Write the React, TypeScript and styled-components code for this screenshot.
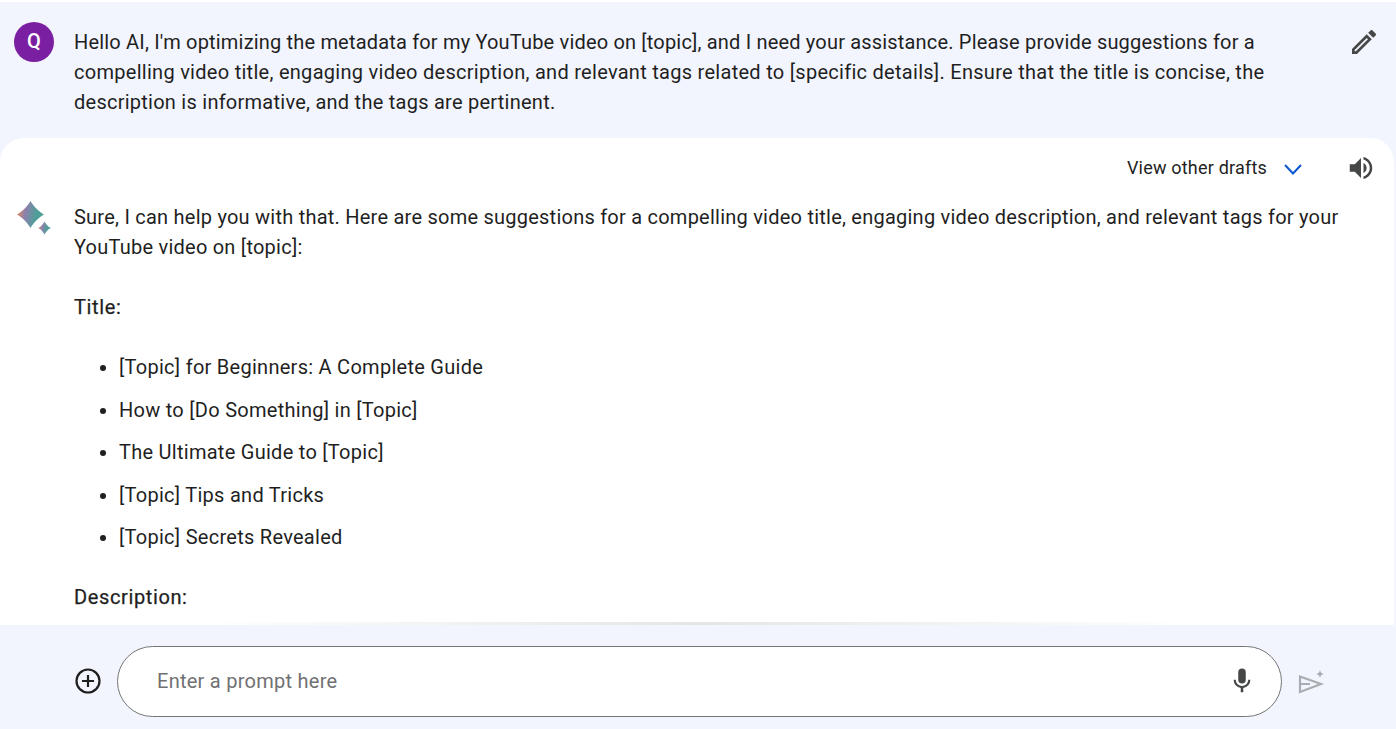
import React from 'react';
import styled, { createGlobalStyle } from 'styled-components';

const GlobalStyle = createGlobalStyle`
  html, body {
    margin: 0;
    padding: 0;
    height: 100%;
    background: #ffffff;
    overflow: hidden;
  }
  * { box-sizing: border-box; }
`;

const Page = styled.div`
  display: flex;
  flex-direction: column;
  height: 729px;
  padding-top: 2px;
  font-family: Roboto, "Liberation Sans", sans-serif;
  font-size: 20px;
  line-height: 30px;
  letter-spacing: 0.235px;
  color: #1f1f1f;
`;

const Main = styled.div`
  flex: 1;
  display: flex;
  flex-direction: column;
  min-height: 0;
  background: #f2f5fd;
`;

const PromptRow = styled.div`
  height: 136px;
  flex-shrink: 0;
  display: flex;
  padding: 20px 16px 0 14px;
`;

const Avatar = styled.div`
  width: 40px;
  height: 40px;
  margin-right: 20px;
  flex-shrink: 0;
  border-radius: 50%;
  background: #7b1fa2;
  color: #fff;
  font-size: 20px;
  font-weight: 500;
  line-height: 38px;
  text-align: center;
`;

const PromptText = styled.div`
  flex: 1;
  padding-top: 5px;
`;

const PromptLine = styled.span<{ $track: number }>`
  display: block;
  white-space: nowrap;
  letter-spacing: ${props => props.$track}px;
`;

const EditIcon = styled.svg`
  width: 32px;
  height: 32px;
  margin-top: 4px;
  flex-shrink: 0;
`;

const Card = styled.div`
  flex: 1;
  min-height: 0;
  margin-right: 2px;
  background: #fff;
  border-radius: 24px 24px 0 0;
  overflow: hidden;
`;

const CardHeader = styled.div`
  height: 60px;
  display: flex;
  align-items: center;
  justify-content: flex-end;
  padding-right: 18px;
`;

const DraftsLabel = styled.span`
  font-size: 18px;
  letter-spacing: 0.2px;
`;

const Chevron = styled.svg`
  width: 20px;
  height: 20px;
  margin-left: 16px;
  margin-right: 43px;
`;

const SpeakerIcon = styled.svg`
  width: 30px;
  height: 30px;
`;

const Response = styled.div`
  display: flex;
  padding: 4px 30px 0 14px;
`;

const SparkBox = styled.svg`
  width: 40px;
  height: 40px;
  margin-right: 20px;
  flex-shrink: 0;
  margin-top: -4px;
`;

const Body = styled.div`
  flex: 1;
`;

const Paragraph = styled.p`
  margin: 0 0 30px;
`;

const Label = styled.p`
  margin: 0 0 30px;
  letter-spacing: 0.62px;
  -webkit-text-stroke: 0.25px #1f1f1f;
`;

const Bullets = styled.ul`
  margin: 0 0 30px;
  padding-left: 45px;
`;

const Bullet = styled.li`
  margin-bottom: 12.5px;
  letter-spacing: 0.27px;
  &:last-child { margin-bottom: 0; }
`;

const Footer = styled.div`
  height: 104px;
  flex-shrink: 0;
  display: flex;
  align-items: flex-start;
  padding-top: 21px;
  position: relative;
  &::before {
    content: '';
    position: absolute;
    top: -3px;
    left: 200px;
    right: 200px;
    height: 3px;
    background: linear-gradient(90deg, transparent, rgba(0, 0, 0, 0.1) 50%, transparent);
  }
`;

const AddIcon = styled.svg`
  width: 28px;
  height: 28px;
  margin: 21px 15.5px 0 73.5px;
  flex-shrink: 0;
`;

const InputBox = styled.div`
  width: 1165px;
  height: 71px;
  border: 1px solid #747775;
  border-radius: 36px;
  background: #fff;
  display: flex;
  align-items: center;
  padding: 0 24px 0 39px;
  color: #6f7173;
`;

const Placeholder = styled.span`
  flex: 1;
  margin-top: -1px;
  letter-spacing: 0.26px;
`;

const MicIcon = styled.svg`
  width: 30px;
  height: 30px;
  margin-top: -2px;
`;

const SendIcon = styled.svg`
  width: 30px;
  height: 30px;
  margin: 22px 0 0 15px;
`;

const App: React.FC = () => (
  <Page>
    <GlobalStyle />
    <Main>
      <PromptRow>
        <Avatar>Q</Avatar>
        <PromptText>
          <PromptLine $track={0.18}>Hello AI, I'm optimizing the metadata for my YouTube video on [topic], and I need your assistance. Please provide suggestions for a</PromptLine>
          <PromptLine $track={0.28}>compelling video title, engaging video description, and relevant tags related to [specific details]. Ensure that the title is concise, the</PromptLine>
          <PromptLine $track={0.25}>description is informative, and the tags are pertinent.</PromptLine>
        </PromptText>
        <EditIcon viewBox="0 0 24 24" fill="#444746">
          <path d="M3 17.25V21h3.75L17.81 9.94l-3.75-3.75L3 17.25zM5.92 19H5v-.92l9.06-9.06.92.92L5.92 19zM20.71 5.63l-2.34-2.34c-.2-.2-.45-.29-.71-.29s-.51.1-.7.29l-1.83 1.83 3.75 3.75 1.83-1.83c.39-.39.39-1.02 0-1.41z" />
        </EditIcon>
      </PromptRow>
      <Card>
        <CardHeader>
          <DraftsLabel>View other drafts</DraftsLabel>
          <Chevron viewBox="0 0 20 20" fill="none" stroke="#0b57d0" strokeWidth="2">
            <path d="M2 7l8 8.500 8-8.500" />
          </Chevron>
          <SpeakerIcon viewBox="0 0 24 24" fill="#444746">
            <path d="M3 9v6h4l5 5V4L7 9H3zm13.500 3c0-1.770-1.020-3.290-2.500-4.030v8.050c1.480-.73 2.500-2.250 2.500-4.020zM14 3.230v2.060c2.890.86 5 3.540 5 6.710s-2.110 5.850-5 6.710v2.060c4.010-.91 7-4.490 7-8.770s-2.990-7.860-7-8.770z" />
          </SpeakerIcon>
        </CardHeader>
        <Response>
          <SparkBox viewBox="0 0 40 40">
            <defs>
              <linearGradient id="spark" x1="0" y1="0.4" x2="1" y2="0.6">
                <stop offset="0" stopColor="#e08a5a" />
                <stop offset="0.3" stopColor="#8f80ae" />
                <stop offset="0.7" stopColor="#4f9f98" />
                <stop offset="1" stopColor="#4f9f98" />
              </linearGradient>
            </defs>
            <path d="M16.500 3C19.500 8 24.500 13.500 30 16.500C24.500 19.500 19.500 25 16.500 30C13.500 25 8.500 19.500 3 16.500C8.500 13.500 13.500 8 16.500 3z" fill="url(#spark)" />
            <path d="M30.500 23.500C32 26 34 29 37 30C34 31 32 34 30.500 36.500C29 34 27 31 24 30C27 29 29 26 30.500 23.500z" fill="url(#spark)" />
          </SparkBox>
          <Body>
            <Paragraph>
              Sure, I can help you with that. Here are some suggestions for a compelling video title, engaging video description, and relevant tags for your YouTube video on [topic]:
            </Paragraph>
            <Label>Title:</Label>
            <Bullets>
              <Bullet>[Topic] for Beginners: A Complete Guide</Bullet>
              <Bullet>How to [Do Something] in [Topic]</Bullet>
              <Bullet>The Ultimate Guide to [Topic]</Bullet>
              <Bullet>[Topic] Tips and Tricks</Bullet>
              <Bullet>[Topic] Secrets Revealed</Bullet>
            </Bullets>
            <Label>Description:</Label>
          </Body>
        </Response>
      </Card>
      <Footer>
        <AddIcon viewBox="0 0 28 28" fill="none" stroke="#1f1f1f" strokeWidth="2.200">
          <circle cx="14" cy="14" r="11.500" />
          <path d="M14 8v12M8 14h12" />
        </AddIcon>
        <InputBox>
          <Placeholder>Enter a prompt here</Placeholder>
          <MicIcon viewBox="0 0 24 24" fill="#444746">
            <path d="M12 14a3 3 0 0 0 3-3V5a3 3 0 0 0-6 0v6a3 3 0 0 0 3 3z" />
            <path d="M17 11a5 5 0 0 1-10 0H5.300a6.700 6.700 0 0 0 5.700 6.600V21h2v-3.400a6.700 6.700 0 0 0 5.700-6.600H17z" />
          </MicIcon>
        </InputBox>
        <SendIcon viewBox="0 0 30 30" fill="none">
          <path d="M3 8.500v15.500l21-8L3 8.500zM3 16h10" stroke="#a9acb0" strokeWidth="2.200" />
          <path d="M23 2c.4 2.500 1.500 3.600 4 4-2.500.4-3.600 1.500-4 4-.4-2.500-1.500-3.600-4-4 2.500-.4 3.600-1.500 4-4z" fill="#a9acb0" />
        </SendIcon>
      </Footer>
    </Main>
  </Page>
);

export default App;
